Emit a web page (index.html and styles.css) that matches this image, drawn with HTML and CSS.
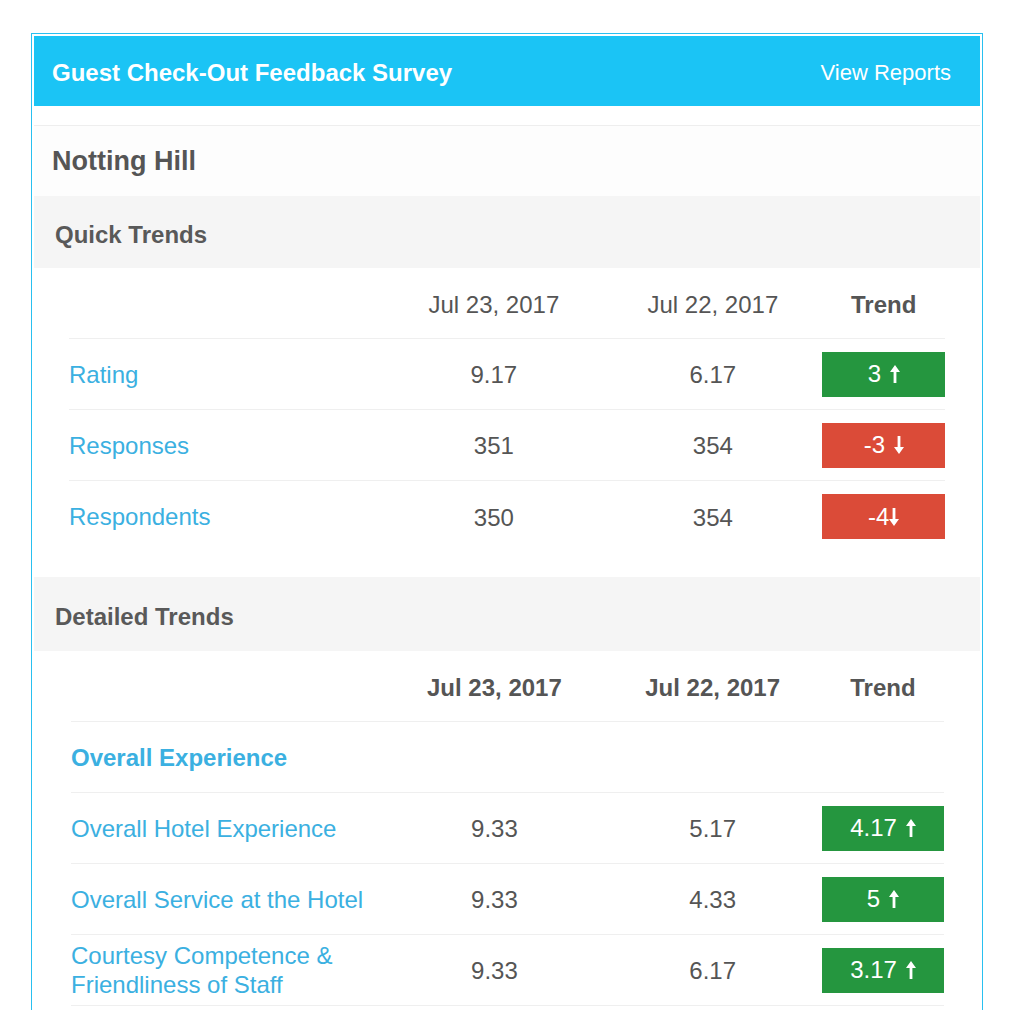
FILE: index.html
```html
<!DOCTYPE html>
<html lang="en">
<head>
<meta charset="utf-8">
<title>Guest Check-Out Feedback Survey</title>
<link rel="stylesheet" href="styles.css">
</head>
<body>
<div class="card">
  <header class="topbar">
    <span class="topbar-title">Guest Check-Out Feedback Survey</span>
    <span class="topbar-link">View Reports</span>
  </header>

  <div class="hotel">Notting Hill</div>

  <div class="section-title">Quick Trends</div>
  <div class="panel quick">
    <div class="tbl">
      <div class="row head">
        <div class="c-label"></div>
        <div class="c-num">Jul 23, 2017</div>
        <div class="c-num">Jul 22, 2017</div>
        <div class="c-trend c-text strong">Trend</div>
      </div>
      <div class="row">
        <div class="c-label link">Rating</div>
        <div class="c-num">9.17</div>
        <div class="c-num">6.17</div>
        <div class="c-trend"><span class="badge up">3 <svg class="arrow" viewBox="0 0 10 18"><path d="M5 0L10 7H6.4V18H3.6V7H0Z"/></svg></span></div>
      </div>
      <div class="row">
        <div class="c-label link">Responses</div>
        <div class="c-num">351</div>
        <div class="c-num">354</div>
        <div class="c-trend"><span class="badge down">-3 <svg class="arrow" viewBox="0 0 10 18"><path d="M5 18L10 11H6.4V0H3.6V11H0Z"/></svg></span></div>
      </div>
      <div class="row last">
        <div class="c-label link">Respondents</div>
        <div class="c-num">350</div>
        <div class="c-num">354</div>
        <div class="c-trend"><span class="badge down">-4<svg class="arrow tight" viewBox="0 0 10 18"><path d="M5 18L10 11H6.4V0H3.6V11H0Z"/></svg></span></div>
      </div>
    </div>
  </div>

  <div class="section-title detailed">Detailed Trends</div>
  <div class="panel detail">
    <div class="tbl">
      <div class="row head">
        <div class="c-label"></div>
        <div class="c-num strong">Jul 23, 2017</div>
        <div class="c-num strong">Jul 22, 2017</div>
        <div class="c-trend c-text strong">Trend</div>
      </div>
      <div class="row">
        <div class="c-label link strong">Overall Experience</div>
        <div class="c-num"></div>
        <div class="c-num"></div>
        <div class="c-trend"></div>
      </div>
      <div class="row">
        <div class="c-label link">Overall Hotel Experience</div>
        <div class="c-num">9.33</div>
        <div class="c-num">5.17</div>
        <div class="c-trend"><span class="badge up">4.17 <svg class="arrow" viewBox="0 0 10 18"><path d="M5 0L10 7H6.4V18H3.6V7H0Z"/></svg></span></div>
      </div>
      <div class="row">
        <div class="c-label link">Overall Service at the Hotel</div>
        <div class="c-num">9.33</div>
        <div class="c-num">4.33</div>
        <div class="c-trend"><span class="badge up">5 <svg class="arrow" viewBox="0 0 10 18"><path d="M5 0L10 7H6.4V18H3.6V7H0Z"/></svg></span></div>
      </div>
      <div class="row">
        <div class="c-label link">Courtesy Competence &amp; Friendliness of Staff</div>
        <div class="c-num">9.33</div>
        <div class="c-num">6.17</div>
        <div class="c-trend"><span class="badge up">3.17 <svg class="arrow" viewBox="0 0 10 18"><path d="M5 0L10 7H6.4V18H3.6V7H0Z"/></svg></span></div>
      </div>
    </div>
  </div>
</div>
</body>
</html>
```

FILE: styles.css
```css
html, body {
  margin: 0;
  padding: 0;
  background: #ffffff;
}

body {
  font-family: "Liberation Sans", Arial, Helvetica, sans-serif;
  color: #555555;
  font-size: 24px;
}

.card {
  width: 946px;
  margin: 33px 0 0 31px;
  border: 1px solid #29c0f0;
  padding: 2px;
  padding-bottom: 0;
  background: #ffffff;
}

.topbar {
  height: 70px;
  box-sizing: border-box;
  background: #1bc4f5;
  display: flex;
  align-items: center;
  justify-content: space-between;
  padding: 4px 29px 0 18px;
  color: #ffffff;
}

.topbar-title {
  font-weight: bold;
  font-size: 24px;
}

.topbar-link {
  font-size: 22px;
}

.hotel {
  margin-top: 19px;
  border-top: 1px solid #eeeeee;
  height: 71px;
  box-sizing: border-box;
  display: flex;
  align-items: center;
  padding: 1px 0 0 18px;
  font-size: 27px;
  font-weight: bold;
  color: #555555;
  background: #fdfdfd;
}

.section-title {
  height: 72px;
  box-sizing: border-box;
  display: flex;
  align-items: center;
  padding: 6px 0 0 21px;
  background: #f5f5f5;
  font-weight: bold;
  font-size: 24px;
  color: #595959;
}

.section-title.detailed {
  height: 74px;
}

.panel {
  background: #ffffff;
}

.quick {
  padding: 0 35px 25px 35px;
}

.detail {
  margin: 0 2px 0 1px;
  padding: 0 34px 60px 36px;
}

.row {
  display: grid;
  grid-template-columns: 36% 25% 25% 14%;
  height: 71px;
  box-sizing: border-box;
  border-bottom: 1px solid #efefef;
  align-items: center;
}

.row.last {
  border-bottom: none;
}

.c-label {
  line-height: 1.2;
  padding-top: 2px;
}

.c-num {
  text-align: center;
  color: #555555;
  padding-top: 2px;
}

.row.head .c-num,
.row.head .c-text {
  padding-top: 3px;
}

.c-trend {
  text-align: center;
  display: flex;
  justify-content: center;
}

.strong {
  font-weight: bold;
}

.link {
  color: #3bb0e1;
}

.badge {
  width: 100%;
  height: 45px;
  display: flex;
  align-items: center;
  justify-content: center;
  color: #ffffff;
  white-space: pre;
}

.badge.up {
  background: #25963f;
}

.badge.down {
  background: #db4b38;
}

.arrow {
  width: 10px;
  height: 18px;
  fill: #ffffff;
  margin-left: 2px;
}

.arrow.tight {
  margin-left: 0;
}
```
